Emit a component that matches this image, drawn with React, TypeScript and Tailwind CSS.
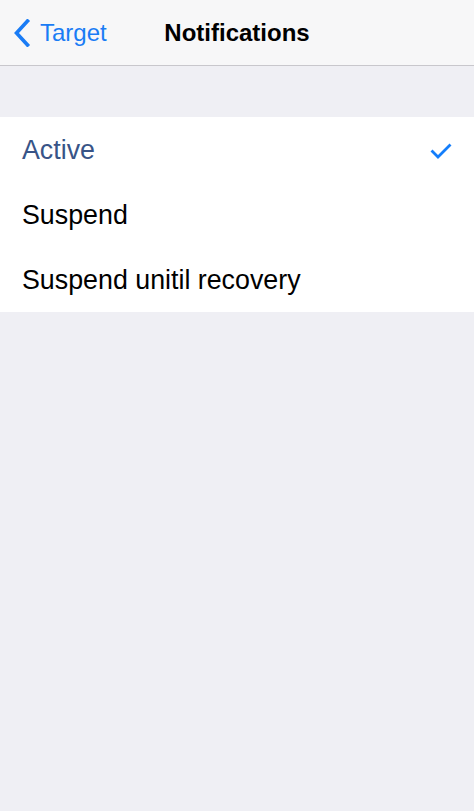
import React from "react";

export default function App() {
  const font = { fontFamily: '"Liberation Sans", Arial, sans-serif' };
  return (
    <div className="w-[474px] h-[811px] bg-[#efeff4] flex flex-col" style={font}>
      <div className="h-[66px] bg-[#f7f7f8] border-b border-[#c8c7cc] relative flex items-center shrink-0">
        <div className="flex items-center pl-[12px] text-[#1a7cf5]">
          <svg width="19" height="28" viewBox="0 0 19 28" className="mt-[1px]">
            <path d="M15.5 2 L4.5 14 L15.5 26" fill="none" stroke="#1a7cf5" strokeWidth="3.6" strokeLinecap="square" strokeLinejoin="miter" />
          </svg>
          <span className="ml-[9px] text-[24px] leading-none">Target</span>
        </div>
        <div className="absolute inset-0 flex items-center justify-center pointer-events-none">
          <span className="text-[24px] font-bold text-black leading-none">Notifications</span>
        </div>
      </div>
      <div className="h-[51px] shrink-0" />
      <div className="bg-white flex flex-col shrink-0">
        <div className="h-[65px] flex items-center justify-between pl-[22px] pr-[22px]">
          <span className="text-[26.8px] text-[#385487] leading-none mt-[2px]">Active</span>
          <svg width="22" height="18" viewBox="0 0 22 18" className="mt-[2px]">
            <path d="M2.5 9.5 L8 15 L19.5 3.5" fill="none" stroke="#147efb" strokeWidth="2.8" strokeLinecap="square" />
          </svg>
        </div>
        <div className="h-[65px] flex items-center pl-[22px]">
          <span className="text-[26.8px] text-black leading-none mt-[2px]">Suspend</span>
        </div>
        <div className="h-[65px] flex items-center pl-[22px]">
          <span className="text-[26.8px] text-black leading-none mt-[2px]">Suspend unitil recovery</span>
        </div>
      </div>
    </div>
  );
}
